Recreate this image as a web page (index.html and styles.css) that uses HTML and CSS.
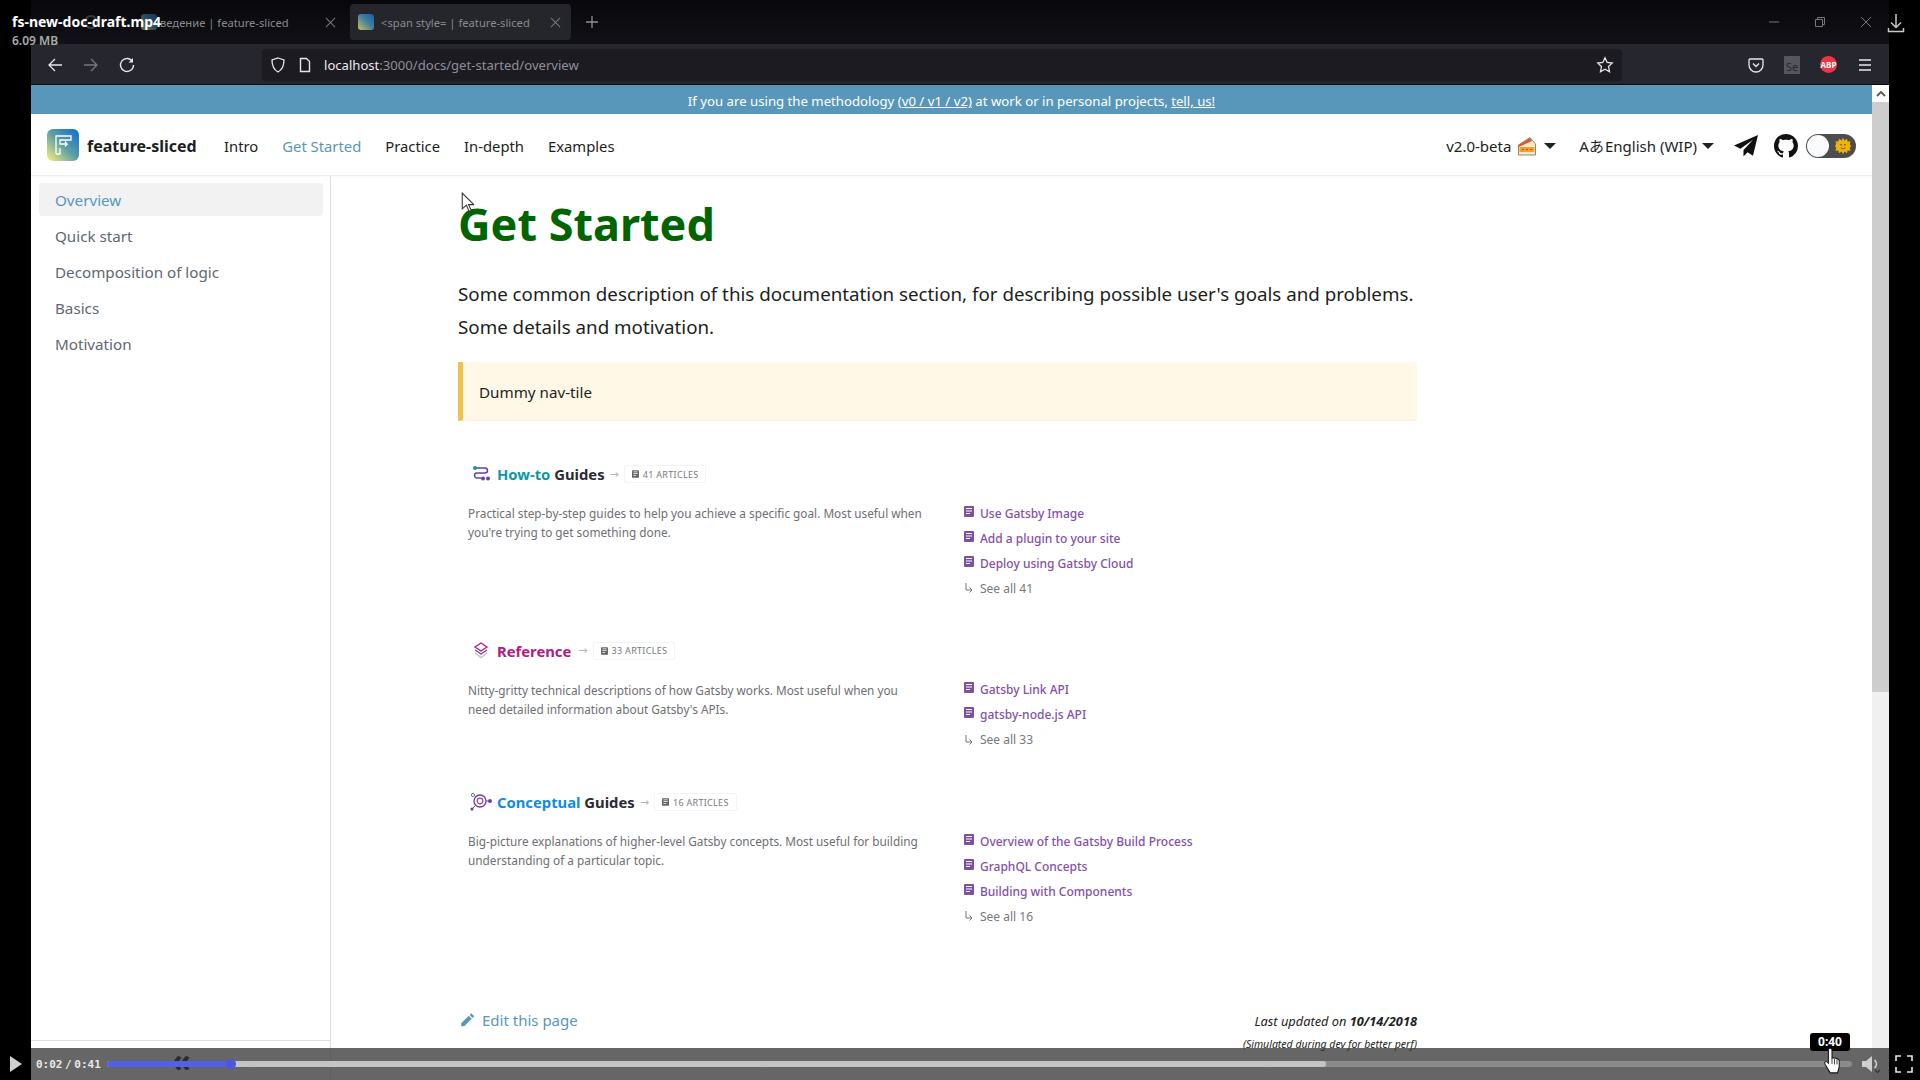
FILE: index.html
```html
<!DOCTYPE html>
<html lang="en">
<head>
<meta charset="utf-8">
<title>feature-sliced</title>
<link rel="stylesheet" href="styles.css">
</head>
<body>
<svg class="defs" width="0" height="0" aria-hidden="true">
  <symbol id="doc" viewBox="0 0 10 11"><path fill="currentColor" fill-rule="evenodd" d="M1 0h8a1 1 0 0 1 1 1v9a1 1 0 0 1-1 1H1a1 1 0 0 1-1-1V1a1 1 0 0 1 1-1zm1 2v1h6V2zm0 2.500v1h6v-1zm0 2.500v1h4V7z"/></symbol>
  <symbol id="xmark" viewBox="0 0 12 12"><path d="M1 1l10 10M11 1L1 11" stroke="currentColor" fill="none" stroke-width="1.100"/></symbol>
  <symbol id="seeall" viewBox="0 0 10 12"><path d="M2 1v7h6M5.500 5.500L8 8l-2.500 2.500" stroke="currentColor" fill="none" stroke-width="1"/></symbol>
  <linearGradient id="logoGrad" x1="0" y1="1" x2="1" y2="0"><stop offset="0" stop-color="#f8f27a"/><stop offset=".5" stop-color="#5d9fa6"/><stop offset="1" stop-color="#0d6bd0"/></linearGradient>
</svg>

<div class="stage">
  <div class="browser">
    <div class="tabbar">
      <div class="tab">
        <span class="tab-fav tab-fav-dim"></span>
        <span class="tab-title">ведение | feature-sliced</span>
        <svg class="tab-x"><use href="#xmark"/></svg>
      </div>
      <div class="tab tab-active">
        <span class="tab-fav"></span>
        <span class="tab-title">&lt;span style= | feature-sliced</span>
        <svg class="tab-x"><use href="#xmark"/></svg>
      </div>
      <svg class="tab-plus" viewBox="0 0 14 14"><path d="M7 1v12M1 7h12" stroke="#8d8d94" stroke-width="1.300" fill="none"/></svg>
      <div class="winctl">
        <svg viewBox="0 0 12 12"><path d="M1 6h10" stroke="#77777c" fill="none"/></svg>
        <svg viewBox="0 0 12 12"><path d="M1.500 3.500h7v7h-7zM3.500 3.500v-2h7v7h-2" stroke="#77777c" fill="none"/></svg>
        <svg viewBox="0 0 12 12"><path d="M1 1l10 10M11 1L1 11" stroke="#77777c" fill="none"/></svg>
      </div>
    </div>

    <div class="toolbar">
      <div class="navbtns">
        <svg viewBox="0 0 16 16"><path d="M15 8H2M8 2L2 8l6 6" stroke="#e6e6ea" stroke-width="1.300" fill="none"/></svg>
        <svg viewBox="0 0 16 16"><path d="M1 8h13M8 2l6 6-6 6" stroke="#77777e" stroke-width="1.300" fill="none"/></svg>
        <svg viewBox="0 0 16 16"><path d="M13.500 4.500A6.500 6.500 0 1 0 14.500 8" stroke="#e6e6ea" stroke-width="1.400" fill="none"/><path d="M14 1v4.500H9.500z" fill="#e6e6ea"/></svg>
      </div>
      <div class="urlbar">
        <svg class="url-shield" viewBox="0 0 16 16"><path d="M8 1l6 2c0 6-1.500 9.500-6 12C3.500 12.500 2 9 2 3z" stroke="#e6e6ea" stroke-width="1.300" fill="none"/></svg>
        <svg class="url-page" viewBox="0 0 14 16"><path d="M2.500 1.500h6l3 3v10h-9z" stroke="#e6e6ea" stroke-width="1.400" fill="none"/></svg>
        <span class="url-text"><span class="url-host">localhost</span>:3000/docs/get-started/overview</span>
        <svg class="url-star" viewBox="0 0 18 18"><path d="M9 1.800l2.200 4.700 5 .6-3.700 3.500 1 5.100L9 13.200l-4.500 2.500 1-5.100L1.800 7.100l5-.6z" stroke="#e6e6ea" stroke-width="1.300" fill="none"/></svg>
      </div>
      <div class="exts">
        <svg viewBox="0 0 16 16"><path d="M2 2h12a1 1 0 0 1 1 1v5a7 7 0 0 1-14 0V3a1 1 0 0 1 1-1z" stroke="#e6e6ea" stroke-width="1.300" fill="none"/><path d="M5 6.500l3 3 3-3" stroke="#e6e6ea" stroke-width="1.400" fill="none"/></svg>
        <span class="ext-se">Se</span>
        <span class="ext-abp">ABP</span>
        <svg viewBox="0 0 16 16"><path d="M2 3h12M2 8h12M2 13h12" stroke="#e6e6ea" stroke-width="1.400" fill="none"/></svg>
      </div>
    </div>

    <div class="page">
      <div class="viewport">
        <div class="banner">If you are using the methodology <u>(v0 / v1 / v2)</u> at work or in personal projects, <u>tell, us!</u></div>

        <header class="navbar">
          <svg class="logo" viewBox="0 0 32 32">
            <rect width="32" height="32" rx="6" fill="url(#logoGrad)"/>
            <path d="M9 25V7h15v4H13v4h7l-2-2.500M20 15l-2 2.500M13 19v6H9" stroke="#fff" stroke-width="1.300" fill="none"/>
          </svg>
          <span class="brand">feature-sliced</span>
          <nav class="navlinks">
            <a>Intro</a><a class="is-active">Get Started</a><a>Practice</a><a>In-depth</a><a>Examples</a>
          </nav>
          <div class="navright">
            <span class="ver">v2.0-beta</span>
            <svg class="cake" viewBox="0 0 20 20">
              <path d="M1.500 9L13 1.500 18.500 8v11h-17z" fill="#fbe9c8" stroke="#7c6a55" stroke-width=".8"/>
              <path d="M1.500 9L13 2l2 3-13.500 6z" fill="#d8572a"/>
              <rect x="2.500" y="11" width="15" height="5" fill="#f2a12e"/>
              <path d="M5 13.500h2M9 13.500h2M13 13.500h2" stroke="#c9491f" stroke-width="1.200"/>
            </svg>
            <span class="caret caret-ver"></span>
            <span class="lang-ico">Aあ</span>
            <span class="lang">English (WIP)</span>
            <span class="caret caret-lang"></span>
            <svg class="tg" viewBox="0 0 24 22"><path d="M24 0L0 10.500l6.500 3.200L19 4.800 9.500 15v6.500l4-4.300 5.500 3.600z" fill="#111"/></svg>
            <svg class="gh" viewBox="0 0 16 16"><path fill="#111" d="M8 0C3.580 0 0 3.580 0 8c0 3.540 2.290 6.530 5.470 7.590.4.070.55-.17.55-.38 0-.19-.01-.82-.01-1.490-2.010.37-2.530-.49-2.690-.94-.09-.23-.48-.94-.82-1.130-.28-.15-.68-.52-.01-.53.63-.01 1.080.58 1.230.82.720 1.210 1.870.87 2.330.66.070-.52.280-.87.510-1.070-1.780-.2-3.640-.89-3.640-3.950 0-.87.310-1.590.820-2.150-.08-.2-.36-1.020.08-2.120 0 0 .67-.21 2.200.82.640-.18 1.320-.27 2-.27s1.360.09 2 .27c1.530-1.040 2.200-.82 2.200-.82.440 1.100.16 1.920.08 2.120.51.560.82 1.270.82 2.150 0 3.070-1.870 3.750-3.650 3.950.29.250.54.730.54 1.480 0 1.070-.01 1.930-.01 2.200 0 .21.150.46.550.38A8.010 8.010 0 0 0 16 8c0-4.420-3.580-8-8-8z"/></svg>
            <div class="toggle">
              <svg class="sun" viewBox="0 0 20 20"><path d="M10 0l2 3 3-2 .8 3.400L19.500 4l-1 3.400L20 10l-1.500 2.600 1 3.400-3.700-.4L15 19l-3-2-2 3-2-3-3 2-.8-3.400-3.700.4 1-3.400L0 10l1.500-2.600-1-3.400 3.700.4L5 1l3 2z" fill="#f0b400"/><circle cx="7.500" cy="8.500" r="1" fill="#5a3a00"/><circle cx="12.500" cy="8.500" r="1" fill="#5a3a00"/><path d="M7 12c2 2 4 2 6 0" stroke="#5a3a00" fill="none"/></svg>
              <span class="knob"></span>
            </div>
          </div>
        </header>

        <div class="layout">
          <aside class="sidebar">
            <ul class="menu">
              <li class="is-active">Overview</li>
              <li>Quick start</li>
              <li>Decomposition of logic</li>
              <li>Basics</li>
              <li>Motivation</li>
            </ul>
            <div class="collapse"><span class="collapse-ico">«</span></div>
          </aside>

          <main class="content">
            <h1>Get Started</h1>
            <p class="lead">Some common description of this documentation section, for describing possible user's goals and problems. Some details and motivation.</p>
            <div class="note">Dummy nav-tile</div>

            <section class="guide">
              <div class="guide-head">
                <svg class="guide-ico" viewBox="0 0 18 18"><path d="M4 3h9a2.500 2.500 0 0 1 0 5H5a2.500 2.500 0 0 0 0 5h4" stroke="#6a3fa0" stroke-width="1.500" fill="none"/><circle cx="3" cy="3" r="2" fill="#0d97a5"/><circle cx="11" cy="13.500" r="2" fill="#6a3fa0"/><circle cx="16" cy="13.500" r="2" fill="#6a3fa0"/></svg>
                <span class="guide-title"><span class="c-teal">How-to</span> Guides</span>
                <span class="arrow">→</span>
                <span class="badge"><svg class="badge-doc"><use href="#doc"/></svg>41 ARTICLES</span>
              </div>
              <div class="guide-body">
                <p class="desc">Practical step-by-step guides to help you achieve a specific goal. Most useful when you're trying to get something done.</p>
                <ul class="links">
                  <li><svg class="li-doc"><use href="#doc"/></svg>Use Gatsby Image</li>
                  <li><svg class="li-doc"><use href="#doc"/></svg>Add a plugin to your site</li>
                  <li><svg class="li-doc"><use href="#doc"/></svg>Deploy using Gatsby Cloud</li>
                  <li class="see"><svg class="li-see"><use href="#seeall"/></svg>See all 41</li>
                </ul>
              </div>
            </section>

            <section class="guide">
              <div class="guide-head">
                <svg class="guide-ico" viewBox="0 0 18 18"><path d="M9 1l6 4-6 4-6-4z" stroke="#b5197f" stroke-width="1.300" fill="none"/><path d="M3 8l6 4 6-4" stroke="#6a3fa0" stroke-width="1.300" fill="none"/><path d="M3 11l6 4.500 6-4.500" stroke="#d9b8e0" stroke-width="1.500" fill="none"/></svg>
                <span class="guide-title c-pink">Reference</span>
                <span class="arrow arrow-wide">→</span>
                <span class="badge"><svg class="badge-doc"><use href="#doc"/></svg>33 ARTICLES</span>
              </div>
              <div class="guide-body">
                <p class="desc">Nitty-gritty technical descriptions of how Gatsby works. Most useful when you need detailed information about Gatsby's APIs.</p>
                <ul class="links">
                  <li><svg class="li-doc"><use href="#doc"/></svg>Gatsby Link API</li>
                  <li><svg class="li-doc"><use href="#doc"/></svg>gatsby-node.js API</li>
                  <li class="see"><svg class="li-see"><use href="#seeall"/></svg>See all 33</li>
                </ul>
              </div>
            </section>

            <section class="guide guide-last">
              <div class="guide-head">
                <svg class="guide-ico guide-ico-wide" viewBox="0 0 22 18"><circle cx="10" cy="8" r="6" stroke="#6a3fa0" stroke-width="1.300" fill="none"/><circle cx="10" cy="8" r="2.800" stroke="#a33fa0" stroke-width="1.200" fill="none"/><circle cx="3" cy="2" r="1.600" stroke="#3f7fd0" fill="none"/><circle cx="2" cy="16" r="1.600" fill="#6a3fa0"/><circle cx="20" cy="8" r="2" fill="#6a3fa0"/><path d="M16 8h3M5.500 12.500L3 15" stroke="#6a3fa0"/></svg>
                <span class="guide-title"><span class="c-blue">Conceptual</span> Guides</span>
                <span class="arrow">→</span>
                <span class="badge"><svg class="badge-doc"><use href="#doc"/></svg>16 ARTICLES</span>
              </div>
              <div class="guide-body">
                <p class="desc">Big-picture explanations of higher-level Gatsby concepts. Most useful for building understanding of a particular topic.</p>
                <ul class="links">
                  <li><svg class="li-doc"><use href="#doc"/></svg>Overview of the Gatsby Build Process</li>
                  <li><svg class="li-doc"><use href="#doc"/></svg>GraphQL Concepts</li>
                  <li><svg class="li-doc"><use href="#doc"/></svg>Building with Components</li>
                  <li class="see"><svg class="li-see"><use href="#seeall"/></svg>See all 16</li>
                </ul>
              </div>
            </section>

            <footer class="docfoot">
              <a class="edit"><svg class="edit-ico" viewBox="0 0 16 16"><path d="M12 .8l3.200 3.200-1.800 1.800-3.200-3.200zM9.300 3.500l3.200 3.200-8 8H1.300v-3.200z" fill="#5897b9"/></svg>Edit this page</a>
              <div class="updated">
                <div class="updated-main">Last updated on <b>10/14/2018</b></div>
                <div class="updated-sub">(Simulated during dev for better perf)</div>
              </div>
            </footer>
          </main>
        </div>
      </div>
      <div class="scrollbar">
        <div class="sb-up"><svg viewBox="0 0 10 6"><path d="M1 5l4-4 4 4" stroke="#555" stroke-width="1.800" fill="none"/></svg></div>
        <div class="sb-thumb"></div>
      </div>
    </div>
  </div>

  <span class="ghost"></span>
  <div class="filemeta">
    <div class="filename">fs-new-doc-draft.mp4</div>
    <div class="filesize">6.09 MB</div>
  </div>
  <svg class="dl" viewBox="0 0 18 20"><path d="M9 1v13M4 9.500L9 14.500l5-5M1.500 15v3.500h15V15" stroke="#c9c9c9" stroke-width="1.500" fill="none"/></svg>

  <div class="controls">
    <svg class="play" viewBox="0 0 12 16"><path d="M0 0l12 8-12 8z" fill="#d0d0d0"/></svg>
    <span class="time">0:02 / 0:41</span>
    <div class="seek">
      <div class="seek-buffer"></div>
      <div class="seek-played"></div>
      <span class="seek-thumb"></span>
      <span class="seek-tip">0:40</span>
    </div>
    <svg class="vol" viewBox="0 0 20 20"><path d="M1 7h4l6-5v16l-6-5H1z" fill="#cfcfcf"/><path d="M13.500 6a5 5 0 0 1 0 8" stroke="#cfcfcf" stroke-width="1.600" fill="none"/><path d="M14 16l2.500 2.500L19 16" stroke="#333" stroke-width="1.200" fill="none"/></svg>
    <svg class="full" viewBox="0 0 18 18"><path d="M1 6V1h5M12 1h5v5M17 12v5h-5M6 17H1v-5" stroke="#e8e8e8" stroke-width="1.600" fill="none"/></svg>
    <svg class="hand" viewBox="0 0 16 24"><path d="M5.500 1c1 0 1.600.7 1.600 1.700v7l1-.2 1.200.3 1.200.2 1.300.5 1.700 1.200v6l-1.500 5.300H5.500L1 15.500c-.6-1.200-.3-2.200.4-2.500.8-.3 1.500.2 2.500 1.400V2.700C3.900 1.700 4.500 1 5.500 1z" fill="#fff" stroke="#111" stroke-width=".9"/><path d="M7.100 10v5M9.300 10.500v5M11.500 11v4.500" stroke="#111" stroke-width=".7"/></svg>
  </div>
  <svg class="cursor" viewBox="0 0 12 20"><path d="M1 1v15l4-3.500 2.500 6 2-1-2.500-5.500h5z" fill="#fff" stroke="#333"/></svg>
</div>
</body>
</html>
```
FILE: styles.css
```css
* { box-sizing: border-box; }
html, body { margin: 0; height: 100%; overflow: hidden; background: #000; }
body { font-family: "Noto Sans", "Open Sans", sans-serif; color: #1c1e21; }
.defs { position: absolute; }
ul { list-style: none; margin: 0; padding: 0; }
p { margin: 0; }

.stage { position: relative; width: 1920px; height: 1080px; padding: 0 31px; background: #000; overflow: hidden; }
.browser { display: flex; flex-direction: column; height: 100%; }

/* tabs */
.tabbar { display: flex; align-items: center; height: 44px; padding-left: 129px; background: linear-gradient(#08080c, #101016); flex: none; }
.tab { display: flex; align-items: center; width: 190px; height: 36px; color: #8a8a90; font-size: 11.200px; }
.tab-active { width: 221px; padding-left: 8px; background: #25252c; border-radius: 4px; }
.tab-fav { width: 16px; height: 16px; border-radius: 3px; background: linear-gradient(45deg, #c9bf5a, #3f7ea0 55%, #1c5aa8); flex: none; }
.tab-fav-dim { opacity: .55; margin-right: -23px; position: relative; left: -19px; }
.tab-title { margin-left: 7px; white-space: nowrap; width: 170px; }
.tab-active .tab-title { width: 174px; }
.tab-x { width: 11px; height: 11px; color: #77777e; flex: none; }
.tab .tab-x { margin-left: -5px; }
.tab-plus { width: 14px; height: 14px; margin-left: 14px; }
.winctl { display: flex; gap: 34px; margin-left: auto; margin-right: 17px; }
.winctl svg { width: 12px; height: 12px; }

/* toolbar */
.toolbar { display: flex; align-items: center; height: 41px; padding-top: 1px; background: #26262e; border-bottom: 1px solid #0a0a0e; flex: none; }
.navbtns { display: flex; gap: 20px; padding-left: 16px; width: 231px; }
.navbtns svg { width: 16px; height: 16px; }
.urlbar { display: flex; align-items: center; width: 1360px; height: 32px; padding: 0 8px; background: #1c1b22; border-radius: 4px; }
.url-shield { width: 16px; height: 16px; }
.url-page { width: 14px; height: 16px; margin-left: 12px; }
.url-text { margin-left: 12px; font-size: 13.100px; color: #8f8f96; white-space: nowrap; }
.url-host { color: #ebebef; }
.url-star { width: 18px; height: 18px; margin-left: auto; }
.exts { display: flex; align-items: center; gap: 20px; padding-left: 126px; }
.exts svg { width: 16px; height: 16px; }
.ext-se { width: 16px; height: 18px; font-size: 11px; line-height: 22px; text-align: center; color: #26262e; background: #55555c; }
.ext-abp { width: 17px; height: 17px; border-radius: 50%; background: #ec3646; color: #fff; font-size: 8px; font-weight: 700; line-height: 17px; text-align: center; }

/* page */
.page { position: relative; display: flex; flex: 1; min-height: 0; background: #fff; }
.viewport { flex: 1; min-width: 0; display: flex; flex-direction: column; }
.scrollbar { width: 17px; background: #f0f0f0; flex: none; }
.sb-up { display: flex; align-items: center; justify-content: center; height: 17px; background: #fff; }
.sb-up svg { width: 10px; height: 6px; }
.sb-thumb { height: 590px; background: #cdcdcd; }

.banner { height: 29px; line-height: 32px; text-align: center; font-size: 13.200px; color: #fff; background: #5897b9; flex: none; }

.navbar { display: flex; align-items: center; height: 62px; padding: 2px 0 0 16px; border-bottom: 1px solid #ededf0; box-shadow: 0 1px 2px rgba(0,0,0,.03); flex: none; font-size: 15px; }
.logo { width: 32px; height: 32px; margin-top: -2px; }
.brand { margin-left: 8px; width: 109px; font-size: 16px; font-weight: 700; white-space: nowrap; }
.navlinks { display: flex; margin-left: 28px; gap: 24px; font-size: 14.800px; }
.navlinks a { color: #1c1e21; }
.navlinks .is-active { color: #5897b9; }
.navright { display: flex; align-items: center; margin-left: auto; padding-right: 16px; }
.ver { white-space: nowrap; }
.cake { width: 20px; height: 20px; margin-left: 6px; }
.caret { width: 0; height: 0; border: 6px solid transparent; border-top: 6px solid #222; border-bottom: 0; }
.caret-ver { margin-left: 7px; }
.lang-ico { margin-left: 23px; white-space: nowrap; font-family: "Noto Sans", "Noto Sans CJK JP", sans-serif; font-size: 15px; }
.lang { margin-left: 1px; white-space: nowrap; }
.caret-lang { margin-left: 5px; }
.tg { width: 24px; height: 22px; margin-left: 20px; }
.gh { width: 24px; height: 24px; margin-left: 16px; }
.toggle { position: relative; display: flex; align-items: center; justify-content: flex-end; width: 50px; height: 24px; margin-left: 8px; padding-right: 5px; background: #4d4d4d; border-radius: 12px; }
.sun { width: 16px; height: 16px; }
.knob { position: absolute; left: 1px; top: 1px; width: 22px; height: 22px; border-radius: 50%; background: #fafbfc; }

.layout { display: flex; flex: 1; min-height: 0; }
.sidebar { display: flex; flex-direction: column; justify-content: space-between; width: 300px; border-right: 1px solid #dadde1; flex: none; }
.menu { padding: 7px 7px 0 8px; }
.menu li { height: 36px; padding: 0 16px; line-height: 34px; font-size: 15.200px; color: #606770; border-radius: 4px; }
.menu .is-active { height: 33px; margin-bottom: 3px; line-height: 35px; color: #5897b9; background: #f2f2f3; }
.collapse { height: 40px; border-top: 1px solid #dadde1; padding-left: 140px; }
.collapse-ico { display: block; font-size: 32px; font-weight: 700; line-height: 38px; color: #111; }

.content { flex: 1; padding: 16px 0 0 127px; min-width: 0; }
.content > * { width: 959px; }
h1 { margin: 0; height: 64px; font-size: 45px; line-height: 64px; font-weight: 700; color: #006400; }
.lead { margin-top: 21px; font-size: 18.750px; line-height: 33px; }
.note { height: 59px; margin-top: 19px; padding-left: 16px; line-height: 61px; font-size: 15.200px; background: #fff8e6; border-left: 5px solid #f0c14f; border-bottom: 1px solid #f5f0e2; }

.guide { margin-top: 38.500px; padding-left: 10px; }
.guide:first-of-type { margin-top: 41px; }
.guide-head { display: flex; align-items: center; height: 24px; }
.guide-ico { width: 18px; height: 18px; margin-left: 4px; flex: none; }
.guide-ico-wide { width: 22px; margin-left: 2px; margin-right: -2px; }
.guide-title { margin-left: 7px; font-size: 14.800px; font-weight: 700; color: #2a2a33; white-space: nowrap; }
.c-teal { color: #0d97a5; }
.c-pink { color: #b5197f; }
.c-blue { color: #0f8ce0; }
.arrow { margin-left: 5px; font-family: "DejaVu Sans", sans-serif; font-size: 11px; color: #b5b5bb; }
.arrow-wide { margin-left: 7px; }
.badge { display: flex; align-items: center; height: 18px; margin-left: 5px; padding: 0 7px; font-size: 9px; letter-spacing: .3px; color: #77777d; border: 1px solid #f4f4f6; border-radius: 2px; white-space: nowrap; }
.badge-doc { width: 7px; height: 8px; margin-right: 4px; color: #666; }
.guide-body { display: grid; grid-template-columns: 496px 1fr; margin-top: 14px; }
.desc { padding-top: 4px; width: 457px; font-size: 11.800px; line-height: 19px; color: #6e6e74; }
.links li { display: flex; align-items: center; height: 25px; padding-top: 1px; font-size: 12px; font-weight: 500; color: #8250a8; white-space: nowrap; }
.li-doc { width: 10px; height: 11px; margin-right: 6px; position: relative; top: -2px; color: #7d4fa3; }
.links .see { color: #77777d; font-weight: 400; }
.li-see { width: 10px; height: 12px; margin-right: 6px; color: #77777d; }

.docfoot { display: flex; justify-content: space-between; margin-top: 80px; }
.edit { display: flex; align-items: center; height: 24px; padding-left: 2px; font-size: 15px; color: #5897b9; }
.edit-ico { width: 15px; height: 16px; margin-right: 7px; }
.updated { text-align: right; font-style: italic; }
.updated-main { font-size: 12.800px; line-height: 26px; }
.updated-sub { font-size: 10.500px; line-height: 20px; }

/* video overlay */
.ghost { position: absolute; left: 84px; top: 15px; width: 14px; height: 14px; border: 2px solid #3a3a3e; border-radius: 50%; }
.filemeta { position: absolute; left: 12px; top: 12px; color: #fff; }
.filename { font-size: 14px; font-weight: 700; line-height: 20px; white-space: nowrap; }
.filesize { font-size: 12px; font-weight: 600; line-height: 18px; color: #aaa; }
.dl { position: absolute; left: 1887px; top: 13px; width: 18px; height: 20px; }
.cursor { position: absolute; left: 461px; top: 192px; width: 13px; height: 21px; }

.controls { position: absolute; left: 0; right: 0; bottom: 0; display: flex; align-items: center; height: 32px; background: linear-gradient(90deg, #000 31px, rgba(51,51,51,.75) 31px, rgba(51,51,51,.75) 1889px, #000 1889px); }
.play { width: 12px; height: 16px; margin-left: 10px; flex: none; }
.time { margin-left: 14px; width: 71px; font-family: "DejaVu Sans Mono", monospace; font-size: 11px; font-weight: 700; word-spacing: -4px; color: #e8e8e8; white-space: nowrap; }
.seek { position: relative; width: 1745px; height: 6px; background: #8c8c8c; border-radius: 3px; flex: none; }
.seek-buffer { position: absolute; left: 0; top: 0; bottom: 0; width: 1219px; background: #c4c4c4; border-radius: 3px; }
.seek-played { position: absolute; left: 0; top: 0; bottom: 0; width: 124px; background: #5160e8; border-radius: 3px; }
.seek-thumb { position: absolute; left: 119px; top: -2px; width: 10px; height: 10px; background: #4a58de; border-radius: 50%; }
.seek-tip { position: absolute; left: 1703px; top: -28px; width: 40px; height: 18px; line-height: 18px; text-align: center; font-size: 12px; font-weight: 700; color: #fff; background: #000; border-radius: 3px; }
.vol { width: 20px; height: 20px; margin-left: 9px; flex: none; }
.full { width: 18px; height: 18px; margin-left: 14px; flex: none; }
.hand { position: absolute; left: 1824px; top: -1px; width: 18px; height: 27px; }
```
